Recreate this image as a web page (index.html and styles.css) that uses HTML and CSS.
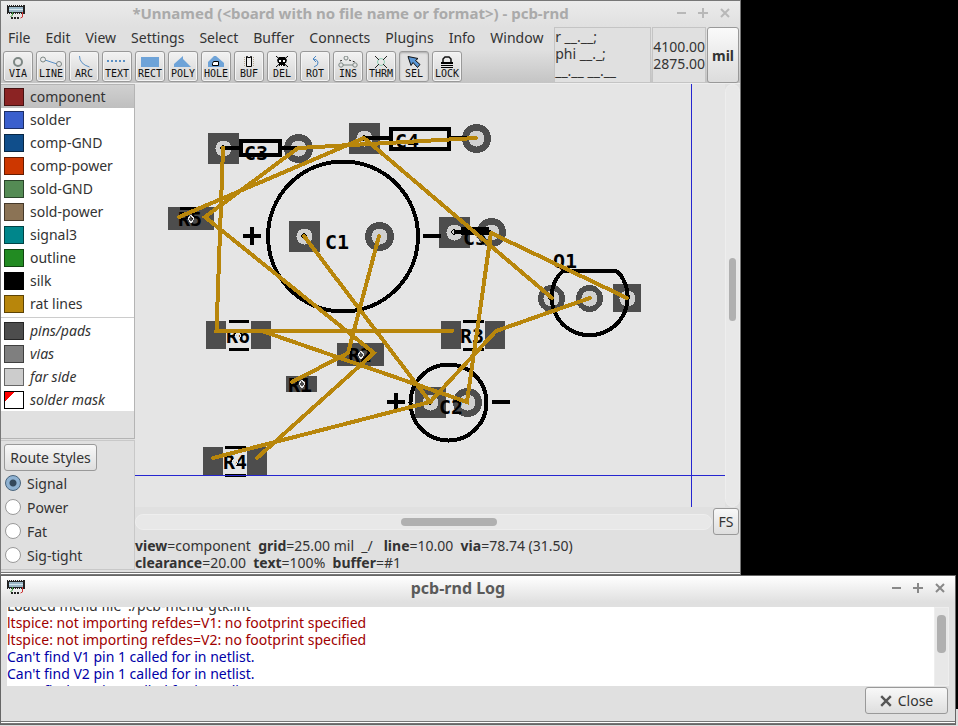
FILE: index.html
```html
<!DOCTYPE html>
<html lang="en">
<head>
<meta charset="utf-8">
<title>pcb-rnd</title>
<link rel="stylesheet" href="styles.css">
</head>
<body>
<svg class="defs" aria-hidden="true">
  <defs>
    <symbol id="app" viewBox="0 0 18 15">
      <path fill="#222" d="M0 0h18v9H0z"/><path fill="#9bb8c8" d="M2 2h14v5H2z"/><path fill="#d4e6ee" d="M2 4h14v1H2z"/>
      <path stroke="#eee" stroke-dasharray="1 1" d="M1 .5h16M1 8.500h16"/>
      <path fill="none" stroke="#3a9a3a" d="M5.500 7v3l-2 2"/><path fill="none" stroke="#c33" d="M15.500 7v5l-2 1"/>
      <path stroke="#222" stroke-width="2" stroke-dasharray="2 1" d="M4 13h8"/>
    </symbol>
    <symbol id="min" viewBox="0 0 10 10"><path stroke="currentColor" stroke-width="2" d="M1 5h9"/></symbol>
    <symbol id="max" viewBox="0 0 10 10"><path stroke="currentColor" stroke-width="2" d="M0 5h10M5 0v10"/></symbol>
    <symbol id="cls" viewBox="0 0 10 10"><path stroke="currentColor" stroke-width="2" d="M1 1l8 8M9 1l-8 8"/></symbol>
  </defs>
</svg>
<div class="desktop">
  <main class="window board">
    <header class="titlebar inactive">
      <svg class="app-icon"><use href="#app"/></svg>
      <h1>*Unnamed (&lt;board with no file name or format&gt;) - pcb-rnd</h1>
      <div class="controls">
        <button aria-label="Minimize"><svg><use href="#min"/></svg></button>
        <button aria-label="Maximize"><svg><use href="#max"/></svg></button>
        <button aria-label="Close window"><svg><use href="#cls"/></svg></button>
      </div>
    </header>
    <div class="top">
      <div class="bars">
        <nav class="menu">
          <a href="#">File</a><a href="#">Edit</a><a href="#">View</a><a href="#">Settings</a><a href="#">Select</a><a href="#">Buffer</a><a href="#">Connects</a><a href="#">Plugins</a><a href="#">Info</a><a href="#">Window</a>
        </nav>
        <div class="tools">
          <button class="tool"><svg viewBox="0 0 24 12"><circle cx="12" cy="6" r="4" fill="none" stroke="#7d8784" stroke-width="2"/></svg>VIA</button>
          <button class="tool"><svg viewBox="0 0 24 12"><path stroke="#5a8fc4" d="M6 4l12 4"/><g fill="none" stroke="#7d8784"><circle cx="4" cy="3.500" r="2.500"/><circle cx="20" cy="8" r="2.500"/></g></svg>LINE</button>
          <button class="tool"><svg viewBox="0 0 24 12"><path fill="none" stroke="#5a8fc4" d="M7.500 0q0 8 10 11"/></svg>ARC</button>
          <button class="tool"><svg viewBox="0 0 24 12"><path fill="none" stroke="#5a8fc4" stroke-width="1" d="M2 5l1-1 1 1-1 1zM6 5l1-1 1 1-1 1zM10 5l1-1 1 1-1 1zM14 5l1-1 1 1-1 1zM18 5l1-1 1 1-1 1z"/></svg>TEXT</button>
          <button class="tool"><svg viewBox="0 0 24 12"><path fill="#6ea3d8" d="M3 1h18v10H3z"/></svg>RECT</button>
          <button class="tool"><svg viewBox="0 0 24 12"><path fill="#6ea3d8" d="M12 0v3l8 8H3V8z"/></svg>POLY</button>
          <button class="tool"><svg viewBox="0 0 24 12"><path fill="#6ea3d8" d="M10 0h2l8 7v4H4V6z"/><path fill="#fff" stroke="#000" d="M9.500 5.500h5v4h-6v-2z"/></svg>HOLE</button>
          <button class="tool"><svg viewBox="0 0 24 12"><path fill="none" stroke="#b8aa90" stroke-width="1" stroke-dasharray="1 1" d="M7.500 1v10M16.500 1v10"/><path fill="#eee" stroke="#000" d="M9.500 .5h1v1h3v-1h1v10h-5z"/></svg>BUF</button>
          <button class="tool"><svg viewBox="0 0 24 12"><path stroke="#000" stroke-width="1" d="M6 0l12 11M18 0L6 11"/><path d="M9 1h6l2 3-1 3h-1v3H9V7H8L7 4z"/><path fill="#fff" d="M9 4h2v2H9zM13 4h2v2h-2zM10 9h1v1h-1zM12 9h1v1h-1z"/></svg>DEL</button>
          <button class="tool"><svg viewBox="0 0 24 12"><path fill="none" stroke="#4a86c4" d="M11 11q5-2 4-5-1-3-5-3m3-3l-3 3 3 3"/></svg>ROT</button>
          <button class="tool"><svg viewBox="0 0 24 12"><g fill="none" stroke="#7d8784"><circle cx="5" cy="9" r="2.200"/><circle cx="19" cy="9" r="2.200"/><circle cx="10" cy="2" r="2"/><path d="M7 9h10"/></g><path stroke="#222" stroke-dasharray="2 2" d="M4 5l3-1M13 4l6 2"/></svg>INS</button>
          <button class="tool"><svg viewBox="0 0 24 12"><circle cx="12" cy="6" r="3.500" fill="none" stroke="#8fd0b4"/><path stroke="#222" d="M6 0l4 4M18 0l-4 4M6 12l4-4M18 12l-4-4"/></svg>THRM</button>
          <button class="tool pressed"><svg viewBox="0 0 24 12"><path fill="#5a96d4" stroke="#111" d="M6 .5l10 2-2.500 2 4.500 4-2.500 3-4.500-5-2 3z"/></svg>SEL</button>
          <button class="tool"><svg viewBox="0 0 24 12"><path fill="none" stroke="#111" stroke-width="1.500" d="M8 7V3l2-2h4l2 2v4"/><path d="M6 6h12v2H6zM6 9h12v1H6zM6 11h12v1H6z"/></svg>LOCK</button>
        </div>
      </div>
      <div class="readout wide">r __.__;<br>phi __._;<br>__.__ __.__</div>
      <div class="readout">4100.00<br>2875.00</div>
      <button class="unit">mil</button>
    </div>
    <div class="middle">
      <aside class="side">
        <ul class="layers">
          <li><button class="current"><i class="sw component"></i>component</button></li>
          <li><button><i class="sw solder"></i>solder</button></li>
          <li><button><i class="sw comp-gnd"></i>comp-GND</button></li>
          <li><button><i class="sw comp-power"></i>comp-power</button></li>
          <li><button><i class="sw sold-gnd"></i>sold-GND</button></li>
          <li><button><i class="sw sold-power"></i>sold-power</button></li>
          <li><button><i class="sw signal3"></i>signal3</button></li>
          <li><button><i class="sw outline"></i>outline</button></li>
          <li><button><i class="sw silk"></i>silk</button></li>
          <li class="last"><button><i class="sw rat"></i>rat lines</button></li>
          <li class="virtual first"><button><i class="sw pins"></i>pins/pads</button></li>
          <li class="virtual"><button><i class="sw vias"></i>vias</button></li>
          <li class="virtual"><button><i class="sw far"></i>far side</button></li>
          <li class="virtual"><button><i class="sw mask"></i>solder mask</button></li>
        </ul>
        <div class="routes">
          <button class="push">Route Styles</button>
          <label><input type="radio" name="route" checked>Signal</label>
          <label><input type="radio" name="route">Power</label>
          <label><input type="radio" name="route">Fat</label>
          <label><input type="radio" name="route">Sig-tight</label>
        </div>
      </aside>
      <section class="work">
        <div class="view">
          <svg class="canvas" role="img" aria-label="Board layout">
            <g transform="translate(-135 -84)">
              <g class="pad">
                <path d="M208 133h31v31h-31zM349 123h31v31h-31zM289 221h31v31h-31zM439 217h31v31h-31zM613 284h28v28h-28zM415 387h31v31h-31z"/>
                <path d="M168 207h46v23h-46zM206 321h20v28h-20zM251 321h20v28h-20zM441 321h20v28h-20zM485 321h20v28h-20zM337 343h47v23h-47zM286 376h31v16h-31zM203 447h20v28h-20zM247 447h20v28h-20z"/>
                <circle cx="298.500" cy="148.500" r="14.500"/><circle cx="476.500" cy="138.500" r="14.500"/><circle cx="379.500" cy="236.500" r="14.500"/><circle cx="491.500" cy="232.500" r="14.500"/><circle cx="467.500" cy="402.500" r="14.500"/><circle cx="551.500" cy="298.500" r="13.500"/><circle cx="589.500" cy="298.500" r="13.500"/>
              </g>
              <g class="hole">
                <circle cx="223.500" cy="148.500" r="8"/><circle cx="298.500" cy="148.500" r="8"/><circle cx="364.500" cy="138.500" r="8"/><circle cx="476.500" cy="138.500" r="8"/><circle cx="304.500" cy="236.500" r="8"/><circle cx="379.500" cy="236.500" r="8"/><circle cx="454.500" cy="232.500" r="8"/><circle cx="491.500" cy="232.500" r="8"/><circle cx="430.500" cy="402.500" r="8"/><circle cx="467.500" cy="402.500" r="8"/><circle cx="551.500" cy="298.500" r="8"/><circle cx="589.500" cy="298.500" r="8"/><circle cx="627.500" cy="298.500" r="8"/>
              </g>
              <g class="silk-line">
                <circle cx="343" cy="236.500" r="75"/><circle cx="448.500" cy="402.500" r="38"/>
                <path d="M563 271h53q5 3 8 10A38 38 0 1 1 554 284Q557 276 563 271z"/>
                <path d="M243 236h18M252 227v18M423 236h18M387 402h18M396 393v18M492 402h18"/>
                <path d="M223 148h18v-7h39v14h-39v-7M280 148h18M364 138h27v-9h58v20h-58v-11M449 138h27"/>
                <path d="M454 232h37M463 229h24v4h-24z"/>
              </g>
              <path class="silk-thin" d="M229 321.500h20M229 349.500h20M463 321.500h21M463 349.500h21M225 447.500h21M225 475.500h21M180 208.500h16"/>
              <g class="mark">
                <path d="M223 145l3 3-3 3-3-3zM364 135l3 3-3 3-3-3zM304 233l3 3-3 3-3-3zM454 229l3 3-3 3-3-3zM551 295l3 3-3 3-3-3zM430 399l3 3-3 3-3-3z"/>
              </g>
              <g class="refdes">
                <text x="244" y="160">C3</text><text x="395" y="148">C4</text><text x="325" y="249">C1</text><text x="463" y="245">C5</text><text x="553" y="268">Q1</text><text x="439" y="414">C2</text>
                <text x="178" y="226">R5</text><text x="226" y="343">R6</text><text x="460" y="343">R3</text><text x="348" y="362">R2</text><text x="288" y="392">R1</text><text x="223" y="469">R4</text>
              </g>
              <g class="origin">
                <path d="M191 215l3 4-3 4-3-4zM238 332l3 4-3 4-3-4zM473 332l3 4-3 4-3-4zM361 351l3 4-3 4-3-4zM302 380l3 4-3 4-3-4zM235 458l3 4-3 4-3-4z"/>
              </g>
              <path class="rats" d="M223 148L216.500 331H452M476 138L298 148L205 217L374 353L257 458M179 217L364 138L552 298M304 236L430 402L213 458M379 236L348 353L292 382M491 233L627 298M491 233L467 402L262 331M590 298L496 331L430 402"/>
              <path class="cross" d="M135 475.500h1600M691.500 84v1600"/>
            </g>
          </svg>
          <div class="track vertical"><span class="thumb"></span></div>
        </div>
        <div class="lower">
          <div class="track horizontal"><span class="thumb"></span></div>
          <button class="push fs">FS</button>
        </div>
        <p class="status"><b>view</b>=component&nbsp; <b>grid</b>=25.00 mil&nbsp; _/ &nbsp; <b>line</b>=10.00&nbsp; <b>via</b>=78.74 (31.50)<br><b>clearance</b>=20.00&nbsp; <b>text</b>=100%&nbsp; <b>buffer</b>=#1</p>
      </section>
    </div>
    <div class="grip"></div>
  </main>
  <section class="window log">
    <header class="titlebar">
      <svg class="app-icon"><use href="#app"/></svg>
      <h2>pcb-rnd Log</h2>
      <div class="controls">
        <button aria-label="Minimize"><svg><use href="#min"/></svg></button>
        <button aria-label="Maximize"><svg><use href="#max"/></svg></button>
        <button aria-label="Close window"><svg><use href="#cls"/></svg></button>
      </div>
    </header>
    <div class="log-view">
      <div class="messages">
        <p>Loaded menu file './pcb-menu-gtk.lht'</p>
        <p class="error">ltspice: not importing refdes=V1: no footprint specified</p>
        <p class="error">ltspice: not importing refdes=V2: no footprint specified</p>
        <p class="info">Can't find V1 pin 1 called for in netlist.</p>
        <p class="info">Can't find V2 pin 1 called for in netlist.</p>
        <p class="info">Can't find V2 pin 2 called for in netlist.</p>
      </div>
      <div class="track vertical"><span class="thumb"></span></div>
    </div>
    <div class="actions"><button class="push close"><svg viewBox="0 0 10 10"><path stroke="#555" stroke-width="2" d="M1 1l8 8M9 1l-8 8"/></svg>Close</button></div>
    <div class="grip"></div>
  </section>
</div>
</body>
</html>
```
FILE: styles.css
```css
* { box-sizing: border-box; }
body { margin: 0; background: #000; color: #333; font: 14px/17px "Noto Sans", sans-serif; }
button { font: inherit; color: inherit; padding: 0; border: 0; background: none; }
h1, h2, p, ul { margin: 0; padding: 0; }
ul { list-style: none; }
.defs { position: absolute; width: 0; height: 0; }

.desktop { min-height: 100vh; display: flex; flex-direction: column; padding-bottom: 1px; background: linear-gradient(#ddd, #ddd) no-repeat left bottom / 100% 17px; }
.window { display: flex; flex-direction: column; background: #e0e0e0; border: 1px solid #666; }
.board { flex: 1; margin-right: 217px; border-color: #777; border-bottom: 0; }
.log { margin-right: 2px; }

.titlebar { display: flex; align-items: center; height: 26px; padding: 0 10px 3px 6px; color: #5a5a5a; background: linear-gradient(#fff, #e0e0e0); }
.titlebar.inactive { color: #aaa; background: linear-gradient(#ebebeb, #e0e0e0); }
.titlebar h1, .titlebar h2 { flex: 1; text-align: center; font-size: 15px; line-height: 20px; white-space: nowrap; }
.titlebar h2 { font-size: 16px; }
.app-icon { width: 18px; height: 15px; }
.controls { display: flex; gap: 12px; }
.controls button { width: 10px; height: 10px; color: #888; }
.inactive .controls button { color: #b8b8b8; }
.controls svg { display: block; width: 10px; height: 10px; }

.top { display: flex; gap: 1px; height: 57px; padding-right: 1px; background: linear-gradient(#e0e0e0 40%, #c4c4c4); border-bottom: 1px solid #eee; }
.bars { flex: 1; }
.menu { display: flex; gap: 15px; height: 22px; padding-left: 7px; line-height: 22px; white-space: nowrap; }
.menu a { color: #333; text-decoration: none; }
.tools { display: flex; gap: 3px; padding: 2px 2px; }
.tool { display: flex; flex-direction: column; align-items: center; width: 30px; height: 31px; padding-top: 4px; border: 1px solid #999; border-radius: 3px; background: linear-gradient(#f2f2f2, #d4d4d4); box-shadow: inset 0 0 0 1px #f4f4f4; color: #111; font: 10px/12px "DejaVu Sans Mono", monospace; }
.tool.pressed { background: #e2e2e2; box-shadow: inset 0 1px 2px #aaa; }
.tool svg { width: 24px; height: 12px; }
.readout { display: flex; align-items: center; border: 1px solid #c4c4c4; background: #e0e0e0; white-space: nowrap; }
.readout.wide { width: 97px; align-items: flex-start; }
.unit { width: 32px; border: 1px solid #999; border-radius: 3px; background: linear-gradient(#fafafa, #dcdcdc); font-weight: bold; }

.middle { flex: 1; display: flex; min-height: 0; }
.side { width: 134px; display: flex; flex-direction: column; }
.layers { flex: 1; border: 1px solid #b4b4b4; border-left: 0; }
.layers li { background: #fff; }
.layers button { display: flex; align-items: center; gap: 6px; width: 100%; height: 23px; padding-left: 3px; text-align: left; }
.layers .current { background: linear-gradient(#d0d0d0, #bfbfbf); }
.layers .last { padding-bottom: 2px; }
.virtual { font-style: italic; }
.virtual.first { border-top: 1px solid #ccc; padding-top: 1px; }
.sw { width: 20px; height: 18px; border: 1px solid rgba(0, 0, 0, .5); }
.component { background: #8b2323; }
.solder { background: #3a5fcd; }
.comp-gnd { background: #104e8b; }
.comp-power { background: #cd3700; }
.sold-gnd { background: #548b54; }
.sold-power { background: #8b7355; }
.signal3 { background: #00868b; }
.outline { background: #228b22; }
.silk { background: #000; }
.rat { background: #b8860b; }
.pins { background: #4d4d4d; }
.vias { background: #7f7f7f; }
.far { background: #ccc; }
.mask { border-color: #000; background: linear-gradient(135deg, #f00 7px, #fff 7px); }

.routes { border: 1px solid #c8c8c8; border-left: 0; padding: 3px 3px 2px; margin: 1px 0 2px; }
.push { border: 1px solid #999; border-radius: 3px; background: linear-gradient(#f8f8f8, #dedede); height: 27px; }
.routes .push { display: block; width: 93px; }
.routes label { display: flex; align-items: center; gap: 6px; height: 24px; }
.routes input { appearance: none; width: 16px; height: 16px; margin: 0 0 0 1px; border: 1px solid #999; border-radius: 50%; background: #fff; }
.routes input:checked { background: radial-gradient(circle, #34495c 3px, #8fb2d2 4px); border-color: #47637c; }

.work { flex: 1; min-width: 0; display: flex; flex-direction: column; }
.view { flex: 1; display: flex; min-height: 0; }
.canvas { flex: 1; min-width: 0; height: 100%; background: #e5e5e5; shape-rendering: crispEdges; }
.pad { fill: #4d4d4d; }
.hole { fill: #d0d0d0; }
.silk-line { fill: none; stroke: #000; stroke-width: 4; }
.silk-thin { stroke: #000; stroke-width: 3; }
.mark { fill: none; stroke: #000; }
.origin { fill: none; stroke: #e5e5e5; }
.refdes { fill: #000; font: bold 20px "DejaVu Sans Mono", monospace; }
.rats { fill: none; stroke: #b8860b; stroke-width: 4; stroke-linecap: round; }
.cross { stroke: #2626d0; }

.track { display: flex; border: 1px solid #eee; background: #e8e8e8; border-radius: 8px; }
.track.vertical { width: 15px; flex-direction: column; align-items: center; }
.track.horizontal { flex: 1; height: 16px; align-items: center; margin-top: 6px; }
.thumb { border-radius: 4px; background: #b0b0b0; }
.board .vertical .thumb { width: 7px; height: 15%; margin-top: 173px; }
.horizontal .thumb { width: 96px; height: 8px; margin-left: 46%; }
.lower { display: flex; gap: 1px; padding: 1px 1px 0 0; }
.fs { width: 26px; }
.status { padding: 2px 0 0; height: 37px; white-space: nowrap; }
.grip { height: 3px; border: solid #777; border-width: 1px 0; background: #fff; }

.log-view { display: flex; height: 79px; margin: 5px 6px 0; }
.messages { flex: 1; overflow: hidden; background: #fff; white-space: nowrap; }
.messages p:first-child { margin-top: -10px; }
.error { color: #a00000; }
.info { color: #0000a8; }
.log .track { width: 15px; border-radius: 0; }
.log .thumb { width: 9px; height: 38px; margin-top: 7px; }
.actions { display: flex; justify-content: flex-end; padding: 1px 7px 7px; }
.close { display: flex; align-items: center; justify-content: center; gap: 6px; width: 83px; }
.close svg { width: 12px; height: 12px; }
```
